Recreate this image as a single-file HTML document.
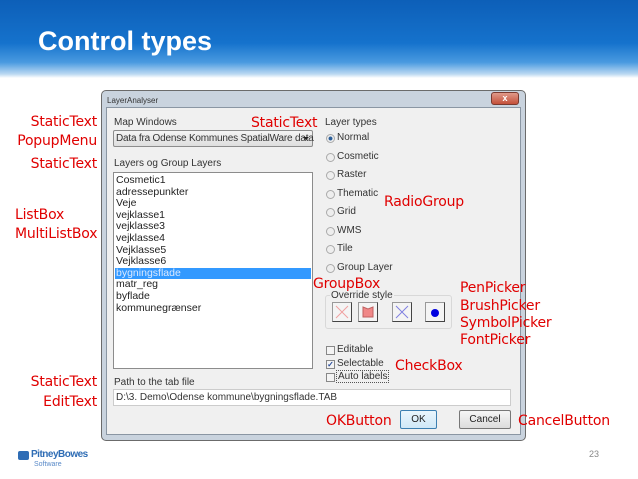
<!DOCTYPE html>
<html><head><meta charset="utf-8"><style>
*{margin:0;padding:0;box-sizing:border-box}
body{width:638px;height:479px;background:#fff;position:relative;overflow:hidden;font-family:"Liberation Sans",sans-serif}
.hdr{position:absolute;left:0;top:0;width:638px;height:78px;background:linear-gradient(180deg,#0d5fb8 0%,#1572cc 55%,#4a9ae0 80%,#bcd9f2 95%,#fff 100%)}
.hdr h1{position:absolute;left:38px;top:26px;color:#fff;font:bold 27px "Liberation Sans",sans-serif}
.r{position:absolute;color:#e00000;font:14px "DejaVu Sans",sans-serif;letter-spacing:-0.2px;white-space:nowrap}
.rr{text-align:right;right:541px}
.dlg{position:absolute;left:101px;top:90px;width:425px;height:351px;background:#c9d3de;border:1px solid #6b6b6b;border-radius:5px}
.cl{position:absolute;left:4px;top:16px;width:415px;height:328px;background:#f0f0f0;border:1px solid #8a96a3}
.t{position:absolute;font:10px "Liberation Sans",sans-serif;color:#333;white-space:nowrap}
.box{position:absolute;background:#fff;border:1px solid #8c8c8c}
.li{position:absolute;left:1px;font:10.5px "Liberation Sans",sans-serif;color:#222;height:11.6px;line-height:11.6px;width:196px;padding-left:1px}
.rad{position:absolute;width:9px;height:9px;border-radius:50%;border:1px solid #aaa;background:#eee}
.cb{position:absolute;width:9px;height:9px;border:1px solid #888;background:#f4f4f4}
.btn{position:absolute;border:1px solid #777;border-radius:2px;background:linear-gradient(#f6f6f6,#dcdcdc);font:10px "Liberation Sans",sans-serif;text-align:center;line-height:17px;color:#222}
.pk{position:absolute;width:20px;height:20px;border:1px solid #999;border-right-color:#444;border-bottom-color:#444;background:#f4f4f4}
</style></head><body>
<div class="hdr"><h1>Control types</h1></div>

<div class="dlg">
 <div class="t" style="left:5px;top:5px;font-size:8px">LayerAnalyser</div>
 <div style="position:absolute;left:389px;top:1px;width:28px;height:13px;background:linear-gradient(#e09a8a,#c4503a);border:1px solid #7a3a30;border-radius:3px;color:#fff;font:bold 9px sans-serif;text-align:center;line-height:11px">x</div>
 <div class="cl"></div>
</div>

<div class="t" style="left:114px;top:117px">Map Windows</div>
<div style="position:absolute;left:113px;top:130px;width:200px;height:17px;border:1px solid #8c8c8c;border-radius:2px;background:linear-gradient(#f4f4f4,#dedede)"></div>
<div class="t" style="left:116px;top:133px;letter-spacing:-0.2px">Data fra Odense Kommunes SpatialWare data</div>
<div style="position:absolute;left:303px;top:137px;border-left:3px solid transparent;border-right:3px solid transparent;border-top:3px solid #222"></div>
<div class="t" style="left:114px;top:158px">Layers og Group Layers</div>
<div class="box" style="left:113px;top:172px;width:200px;height:197px">
 <div class="li" style="top:2px">Cosmetic1</div>
 <div class="li" style="top:13.6px">adressepunkter</div>
 <div class="li" style="top:25.2px">Veje</div>
 <div class="li" style="top:36.8px">vejklasse1</div>
 <div class="li" style="top:48.4px">vejklasse3</div>
 <div class="li" style="top:60px">vejklasse4</div>
 <div class="li" style="top:71.6px">Vejklasse5</div>
 <div class="li" style="top:83.2px">Vejklasse6</div>
 <div class="li" style="top:94.8px;background:#3399ff;color:#dbe9ff">bygningsflade</div>
 <div class="li" style="top:106.4px">matr_reg</div>
 <div class="li" style="top:118px">byflade</div>
 <div class="li" style="top:129.6px">kommunegrænser</div>
</div>

<div class="t" style="left:325px;top:117px">Layer types</div>
<div class="rad" style="left:326px;top:134px;background:radial-gradient(#2c5f9a 35%,#eee 45%)"></div><div class="t" style="left:337px;top:132px">Normal</div>
<div class="rad" style="left:326px;top:153px"></div><div class="t" style="left:337px;top:151px">Cosmetic</div>
<div class="rad" style="left:326px;top:171px"></div><div class="t" style="left:337px;top:169px">Raster</div>
<div class="rad" style="left:326px;top:190px"></div><div class="t" style="left:337px;top:188px">Thematic</div>
<div class="rad" style="left:326px;top:208px"></div><div class="t" style="left:337px;top:206px">Grid</div>
<div class="rad" style="left:326px;top:227px"></div><div class="t" style="left:337px;top:225px">WMS</div>
<div class="rad" style="left:326px;top:245px"></div><div class="t" style="left:337px;top:243px">Tile</div>
<div class="rad" style="left:326px;top:264px"></div><div class="t" style="left:337px;top:262px">Group Layer</div>

<div style="position:absolute;left:325px;top:295px;width:127px;height:34px;border:1px solid #d8d8d8;border-radius:3px"></div>
<div class="t" style="left:330px;top:290px;background:#f0f0f0;padding:0 1px">Override style</div>
<div class="pk" style="left:332px;top:302px"><svg width="18" height="18"><path d="M3 3L15 15M15 3L3 15" stroke="#f0a0a0" stroke-width="1"/></svg></div>
<div class="pk" style="left:358px;top:302px"><svg width="18" height="18"><path d="M4 4L9 6L14 4V14H4Z" fill="#f08888" stroke="#c06060"/></svg></div>
<div class="pk" style="left:392px;top:302px"><svg width="18" height="18"><path d="M3 3L15 15M15 3L3 15" stroke="#8080e0" stroke-width="1"/></svg></div>
<div class="pk" style="left:425px;top:302px"><svg width="18" height="18"><circle cx="9" cy="10" r="4" fill="#0000e0"/></svg></div>

<div class="cb" style="left:326px;top:346px"></div><div class="t" style="left:337px;top:344px">Editable</div>
<div class="cb" style="left:326px;top:360px;color:#2a4d9a;font:bold 8px sans-serif;line-height:7px;text-align:center">✓</div><div class="t" style="left:337px;top:358px">Selectable</div>
<div class="cb" style="left:326px;top:373px"></div><div class="t" style="left:336px;top:370px;border:1px dotted #555;padding:0 1px">Auto labels</div>

<div class="t" style="left:114px;top:377px">Path to the tab file</div>
<div class="box" style="left:113px;top:389px;width:398px;height:17px;border-color:#ccc"></div>
<div class="t" style="left:116px;top:392px">D:\3. Demo\Odense kommune\bygningsflade.TAB</div>
<div class="btn" style="left:400px;top:410px;width:37px;height:19px;border-color:#3c7fb1;background:linear-gradient(#eaf6fd,#d0e8f7)">OK</div>
<div class="btn" style="left:459px;top:410px;width:52px;height:19px">Cancel</div>

<div class="r rr" style="top:114px">StaticText</div>
<div class="r rr" style="top:133px">PopupMenu</div>
<div class="r rr" style="top:156px">StaticText</div>
<div class="r" style="left:15px;top:207px">ListBox</div>
<div class="r" style="left:15px;top:226px">MultiListBox</div>
<div class="r" style="left:251px;top:115px">StaticText</div>
<div class="r" style="left:384px;top:194px">RadioGroup</div>
<div class="r" style="left:313px;top:276px">GroupBox</div>
<div class="r" style="left:460px;top:280px">PenPicker</div>
<div class="r" style="left:460px;top:298px">BrushPicker</div>
<div class="r" style="left:460px;top:315px">SymbolPicker</div>
<div class="r" style="left:460px;top:332px">FontPicker</div>
<div class="r" style="left:395px;top:358px">CheckBox</div>
<div class="r rr" style="top:374px">StaticText</div>
<div class="r rr" style="top:394px">EditText</div>
<div class="r" style="left:326px;top:413px">OKButton</div>
<div class="r" style="left:518px;top:413px">CancelButton</div>

<div style="position:absolute;left:18px;top:451px;width:11px;height:9px;background:#2f6db5;border-radius:2px"></div>
<div style="position:absolute;left:31px;top:449px;font:bold 10px 'Liberation Sans',sans-serif;color:#2f6db5;letter-spacing:-0.5px">PitneyBowes</div>
<div style="position:absolute;left:34px;top:461px;font:7px 'Liberation Sans',sans-serif;color:#5a8ac8">Software</div>
<div style="position:absolute;left:589px;top:449px;font:9px 'Liberation Sans',sans-serif;color:#888">23</div>
</body></html>
